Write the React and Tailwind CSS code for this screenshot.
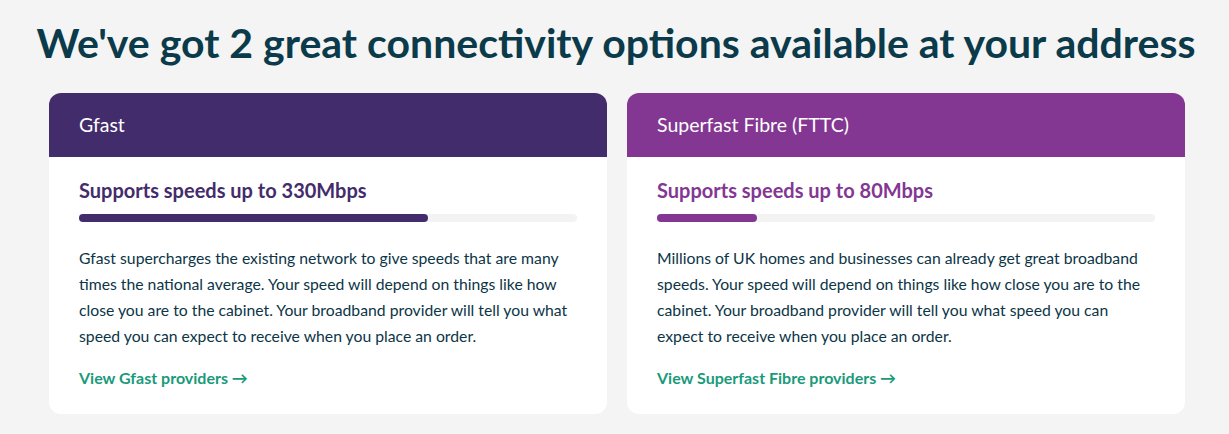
export default function App() {
  const cards = [
    {
      title: "Gfast",
      header: "bg-[#432c6b]",
      speedColor: "text-[#432c6b]",
      bar: "bg-[#432c6b]",
      pct: 70,
      speed: "Supports speeds up to 330Mbps",
      text: "Gfast supercharges the existing network to give speeds that are many times the national average. Your speed will depend on things like how close you are to the cabinet. Your broadband provider will tell you what speed you can expect to receive when you place an order.",
      link: "View Gfast providers",
    },
    {
      title: "Superfast Fibre (FTTC)",
      header: "bg-[#833793]",
      speedColor: "text-[#833793]",
      bar: "bg-[#833793]",
      pct: 20,
      speed: "Supports speeds up to 80Mbps",
      text: "Millions of UK homes and businesses can already get great broadband speeds. Your speed will depend on things like how close you are to the cabinet. Your broadband provider will tell you what speed you can expect to receive when you place an order.",
      link: "View Superfast Fibre providers",
    },
  ];
  return (
    <div className="min-h-[434px] bg-[#f4f4f4] pt-[19px] pb-[20px]" style={{ fontFamily: "Lato, 'Open Sans', sans-serif" }}>
      <h1 className="text-center text-[41px] leading-[48px] font-bold text-[#0b3a4a] pl-[3px]">
        We've got 2 great connectivity options available at your address
      </h1>
      <div className="mt-[26px] flex gap-[20px] pl-[49px]">
        {cards.map((c) => (
          <div key={c.title} className="w-[558px] h-[321px] bg-white rounded-[12px] overflow-hidden">
            <div className={`${c.header} h-[64px] flex items-center px-[30px] text-white text-[19.5px]`}>
              {c.title}
            </div>
            <div className="px-[30px] pt-[20px]">
              <div className={`${c.speedColor} text-[20px] font-bold leading-[26px]`}>{c.speed}</div>
              <div className="mt-[11px] h-[8px] w-[498px] rounded-full bg-[#f3f3f3]">
                <div className={`${c.bar} h-[8px] rounded-full`} style={{ width: `${c.pct}%` }} />
              </div>
              <p className="mt-[23px] text-[15.75px] leading-[26px] text-[#0c3547]">{c.text}</p>
              <div className="mt-[17px] text-[16px] font-bold text-[#1a9a7a]">{c.link} →</div>
            </div>
          </div>
        ))}
      </div>
    </div>
  );
}
